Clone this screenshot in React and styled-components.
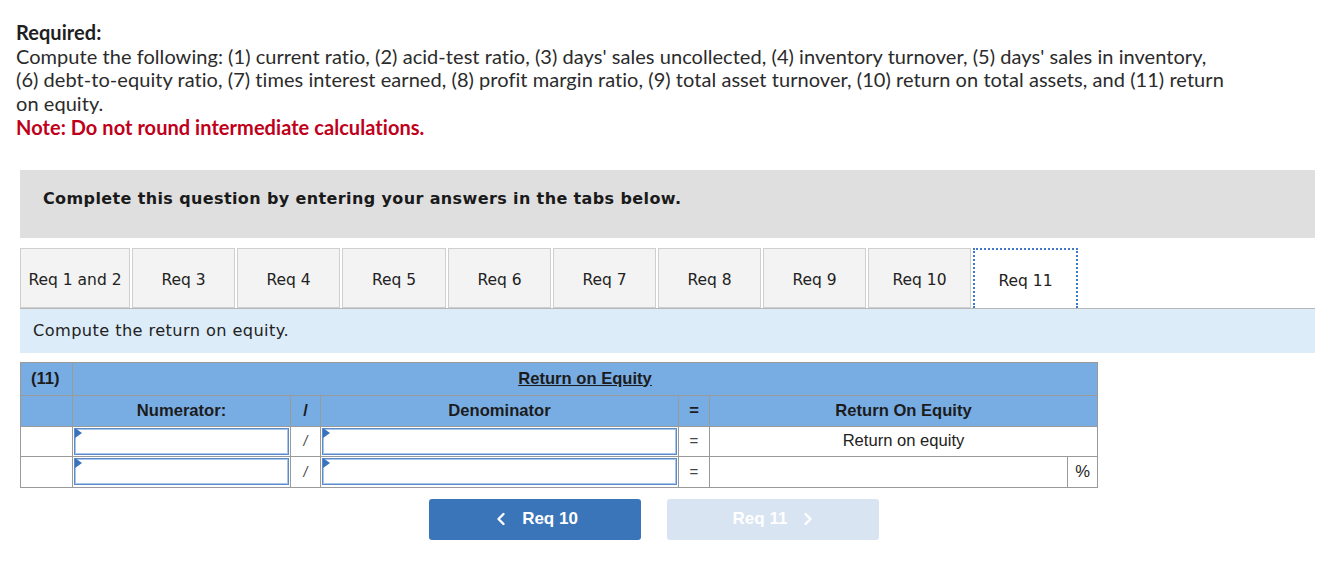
import React from "react";
import styled, { createGlobalStyle } from "styled-components";

const Global = createGlobalStyle`
  html, body { margin: 0; padding: 0; background: #fff; }
  body { font-family: "Liberation Sans", Arial, sans-serif; }
`;

const Page = styled.div`
  width: 1331px;
  height: 565px;
  box-sizing: border-box;
  padding: 21px 16px 0 20px;
  display: flex;
  flex-direction: column;
`;

const Intro = styled.div`
  margin-left: -4px;
  font-family: Lato, "Liberation Sans", sans-serif;
  font-size: 20px;
  letter-spacing: 0.05px;
  line-height: 23.7px;
  color: #2b2b2b;
`;

const Bold = styled.div`
  font-weight: 700;
  color: #1f1f1f;
`;

const Note = styled.div`
  font-weight: 700;
  color: #c0001a;
`;

const Banner = styled.div`
  margin-top: 30px;
  height: 68px;
  box-sizing: border-box;
  background: #dfdfdf;
  display: flex;
  align-items: flex-start;
  padding: 19px 0 0 23px;
  font-family: "DejaVu Sans", Verdana, sans-serif;
  font-weight: 700;
  font-size: 16px;
  letter-spacing: 0.38px;
  color: #1a1a1a;
`;

const Tabs = styled.div`
  margin-top: 10px;
  display: flex;
  gap: 2px;
  border-bottom: 1px solid #b8b8b8;
`;

const Tab = styled.div`
  width: ${(p) => p.$w}px;
  height: 60px;
  box-sizing: border-box;
  display: flex;
  align-items: center;
  justify-content: center;
  padding-top: 4px;
  font-family: "DejaVu Sans", Verdana, sans-serif;
  font-size: 15.5px;
  color: #222;
  background: ${(p) => (p.$active ? "#fff" : "#f3f3f3")};
  border: ${(p) => (p.$active ? "2px dotted #3f78c8" : "1px solid #cfcfcf")};
  border-bottom: ${(p) => (p.$active ? "none" : "1px solid #cfcfcf")};
  margin-bottom: ${(p) => (p.$active ? "-1px" : "0")};
`;

const Instruction = styled.div`
  height: 44px;
  background: #dcecf9;
  display: flex;
  align-items: center;
  padding-left: 13px;
  box-sizing: border-box;
  font-family: "DejaVu Sans", Verdana, sans-serif;
  font-size: 16.2px;
  letter-spacing: 0.4px;
  color: #222;
`;

const Table = styled.table`
  margin-top: 9px;
  width: 1077px;
  border-collapse: collapse;
  table-layout: fixed;
  font-family: "Liberation Sans", Arial, sans-serif;
  font-size: 16.6px;
  line-height: 18px;
  color: #222;
  td {
    border: 1px solid #9a9a9a;
    padding: 0;
    box-sizing: border-box;
  }
`;

const HeadRow = styled.tr`
  background: #78ade4;
  height: ${(p) => p.$h}px;
  font-weight: 700;
  td { color: #1c1c1c; }
`;

const Row = styled.tr`
  height: ${(p) => p.$h}px;
  background: #fff;
`;

const Cell = styled.td`
  text-align: ${(p) => p.$align || "center"};
  vertical-align: middle;
  padding-left: ${(p) => p.$pl || 0}px !important;
`;

const Title = styled.span`
  text-decoration: underline;
`;

const Slash = styled.span`
  font-style: italic;
  color: #444;
  font-size: 14px;
`;

const Eq = styled.span`
  color: #444;
  font-size: 15px;
`;

const InputBox = styled.div`
  position: relative;
  height: 27px;
  margin: 0 1px;
  box-sizing: border-box;
  background: #fff;
  border: 1px solid #5b8cc9;
  box-shadow: inset 0 0 0 1px #a9c6ea;
`;

const Flag = styled.div`
  position: absolute;
  left: 0;
  top: -1px;
  width: 0;
  height: 0;
  border-top: 5px solid transparent;
  border-bottom: 5px solid transparent;
  border-left: 7px solid #3a73bd;
`;

const Nav = styled.div`
  margin-top: 11px;
  margin-left: 409px;
  display: flex;
  gap: 26px;
`;

const NavButton = styled.div`
  width: 212px;
  height: 41px;
  border-radius: 3px;
  background: ${(p) => (p.$disabled ? "#d8e4f2" : "#3a75b9")};
  color: #fff;
  display: flex;
  align-items: center;
  justify-content: center;
  gap: 16px;
  padding-left: ${(p) => (p.$disabled ? "0" : "4px")};
  box-sizing: border-box;
  font-family: "Liberation Sans", Arial, sans-serif;
  font-weight: 700;
  font-size: 17px;
  svg { display: block; }
`;

const Chevron = ({ dir }) => (
  <svg width="10" height="14" viewBox="0 0 10 14">
    <path
      d={dir === "left" ? "M7.5 2 L2.5 7 L7.5 12" : "M2.5 2 L7.5 7 L2.5 12"}
      fill="none"
      stroke="#fff"
      strokeWidth="2.4"
      strokeLinecap="round"
      strokeLinejoin="round"
    />
  </svg>
);

const tabs = [
  ["Req 1 and 2", 110],
  ["Req 3", 103],
  ["Req 4", 103],
  ["Req 5", 104],
  ["Req 6", 103],
  ["Req 7", 103],
  ["Req 8", 103],
  ["Req 9", 103],
  ["Req 10", 103],
  ["Req 11", 105],
];

const Input = () => (
  <InputBox>
    <Flag />
  </InputBox>
);

export default function App() {
  return (
    <>
      <Global />
      <Page>
        <Intro>
          <Bold>Required:</Bold>
          Compute the following: (1) current ratio, (2) acid-test ratio, (3) days' sales uncollected, (4) inventory turnover, (5) days' sales in inventory,
          <br />
          (6) debt-to-equity ratio, (7) times interest earned, (8) profit margin ratio, (9) total asset turnover, (10) return on total assets, and (11) return
          <br />
          on equity.
          <Note>Note: Do not round intermediate calculations.</Note>
        </Intro>
        <Banner>Complete this question by entering your answers in the tabs below.</Banner>
        <Tabs>
          {tabs.map(([t, w], i) => (
            <Tab key={t} $w={w} $active={i === tabs.length - 1}>
              {t}
            </Tab>
          ))}
        </Tabs>
        <Instruction>Compute the return on equity.</Instruction>
        <Table>
          <colgroup>
            <col style={{ width: 52 }} />
            <col style={{ width: 218 }} />
            <col style={{ width: 30 }} />
            <col style={{ width: 358 }} />
            <col style={{ width: 31 }} />
            <col style={{ width: 358 }} />
            <col style={{ width: 30 }} />
          </colgroup>
          <tbody>
            <HeadRow $h={33}>
              <Cell $align="left" $pl={10}>(11)</Cell>
              <Cell colSpan={6}>
                <Title>Return on Equity</Title>
              </Cell>
            </HeadRow>
            <HeadRow $h={31}>
              <Cell />
              <Cell>Numerator:</Cell>
              <Cell>/</Cell>
              <Cell>Denominator</Cell>
              <Cell>=</Cell>
              <Cell colSpan={2}>Return On Equity</Cell>
            </HeadRow>
            <Row $h={30}>
              <Cell />
              <Cell><Input /></Cell>
              <Cell><Slash>/</Slash></Cell>
              <Cell><Input /></Cell>
              <Cell><Eq>=</Eq></Cell>
              <Cell colSpan={2}>Return on equity</Cell>
            </Row>
            <Row $h={31}>
              <Cell />
              <Cell><Input /></Cell>
              <Cell><Slash>/</Slash></Cell>
              <Cell><Input /></Cell>
              <Cell><Eq>=</Eq></Cell>
              <Cell />
              <Cell>%</Cell>
            </Row>
          </tbody>
        </Table>
        <Nav>
          <NavButton>
            <Chevron dir="left" />
            Req 10
          </NavButton>
          <NavButton $disabled>
            Req 11
            <Chevron dir="right" />
          </NavButton>
        </Nav>
      </Page>
    </>
  );
}
